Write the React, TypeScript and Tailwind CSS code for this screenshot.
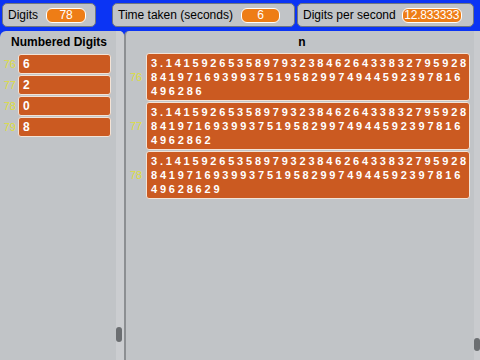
import React from "react";

const monFont = { fontFamily: '"Liberation Sans", Arial, sans-serif' };

function Monitor({ label, value, w, ml, pillW, gap }: { label: string; value: string; w: string; ml: string; pillW: string; gap: string }) {
  return (
    <div className={`${w} ${ml} h-[24px] rounded-[5px] border border-[#6f7780] bg-[#c1c4c7] flex items-center pl-[5px]`}>
      <span className="text-[12px] text-black leading-none">{label}</span>
      <span className={`${gap} ${pillW} h-[15px] rounded-[6px] border border-white bg-[#ee7d16] text-white text-[12px] leading-[13px] text-center whitespace-nowrap tracking-[-0.2px]`}>{value}</span>
    </div>
  );
}

const leftItems = [
  ["76", "6"],
  ["77", "2"],
  ["78", "0"],
  ["79", "8"],
];

const line1 = "3.1415926535897932384626433832795928";
const line2 = "84197169399375195829974944592397816";
const rightItems: [string, string][] = [
  ["76", "496286"],
  ["77", "4962862"],
  ["78", "49628629"],
];

export default function App() {
  return (
    <div className="w-[480px] h-[360px] bg-[#0b34f4] flex flex-col overflow-hidden" style={monFont}>
      <div className="h-[31px] flex items-start pt-[3px] shrink-0">
        <Monitor label="Digits" value="78" w="w-[94px]" ml="ml-[2px]" pillW="w-[40px]" gap="ml-[8px]" />
        <Monitor label="Time taken (seconds)" value="6" w="w-[183px]" ml="ml-[16px]" pillW="w-[39px]" gap="ml-[8px]" />
        <Monitor label="Digits per second" value="12.833333" w="w-[177px]" ml="ml-[2px]" pillW="w-[60px]" gap="ml-[6px]" />
      </div>
      <div className="flex flex-1 min-h-0">
        <div className="w-[124px] bg-[#c1c4c7] rounded-tl-[6px] rounded-tr-[5px] flex overflow-hidden">
          <div className="w-[116px] flex flex-col">
            <div className="h-[23px] text-[12px] font-bold text-black text-center leading-[23px] pl-[2px]">Numbered Digits</div>
            <div className="flex flex-col gap-[1px]">
              {leftItems.map(([i, v]) => (
                <div key={i} className="flex items-center h-[20px]">
                  <span className="w-[18px] text-right pr-[2px] text-[11px] text-[#dede3e] leading-none">{i}</span>
                  <div className="w-[93px] h-[20px] rounded-[3px] border border-[#f3e3d6] bg-[#cb5a21] text-white font-bold text-[12px] leading-[18px] pl-[4px]">{v}</div>
                </div>
              ))}
            </div>
          </div>
          <div className="w-[8px] bg-[#cbcdd0] flex flex-col justify-end pb-[18px]">
            <div className="w-[6px] h-[15px] rounded-[3px] bg-[#6b6e71]"></div>
          </div>
        </div>
        <div className="flex-1 bg-[#c1c4c7] border-l-[2px] border-[#8c8f92] rounded-tl-[5px] flex overflow-hidden">
          <div className="w-[349px] flex flex-col">
            <div className="h-[22px] text-[12px] font-bold text-black text-center leading-[22px] pl-[4px]">n</div>
            <div className="flex flex-col gap-[1px]">
              {rightItems.map(([i, last]) => (
                <div key={i} className="flex items-center">
                  <span className="w-[20px] text-center text-[11px] text-[#dede3e] leading-none">{i}</span>
                  <div className="w-[324px] h-[48px] rounded-[3px] border border-[#f3e3d6] bg-[#cb5a21] text-white font-bold text-[11px] leading-[14px] tracking-[2.8px] pl-[4px] pt-[2px] whitespace-nowrap overflow-hidden">
                    <div>{line1}</div>
                    <div>{line2}</div>
                    <div>{last}</div>
                  </div>
                </div>
              ))}
            </div>
          </div>
          <div className="flex-1 bg-[#c9cbce] flex flex-col justify-end pb-[9px]">
            <div className="w-[6px] h-[13px] rounded-[3px] bg-[#6b6e71]"></div>
          </div>
        </div>
      </div>
    </div>
  );
}
